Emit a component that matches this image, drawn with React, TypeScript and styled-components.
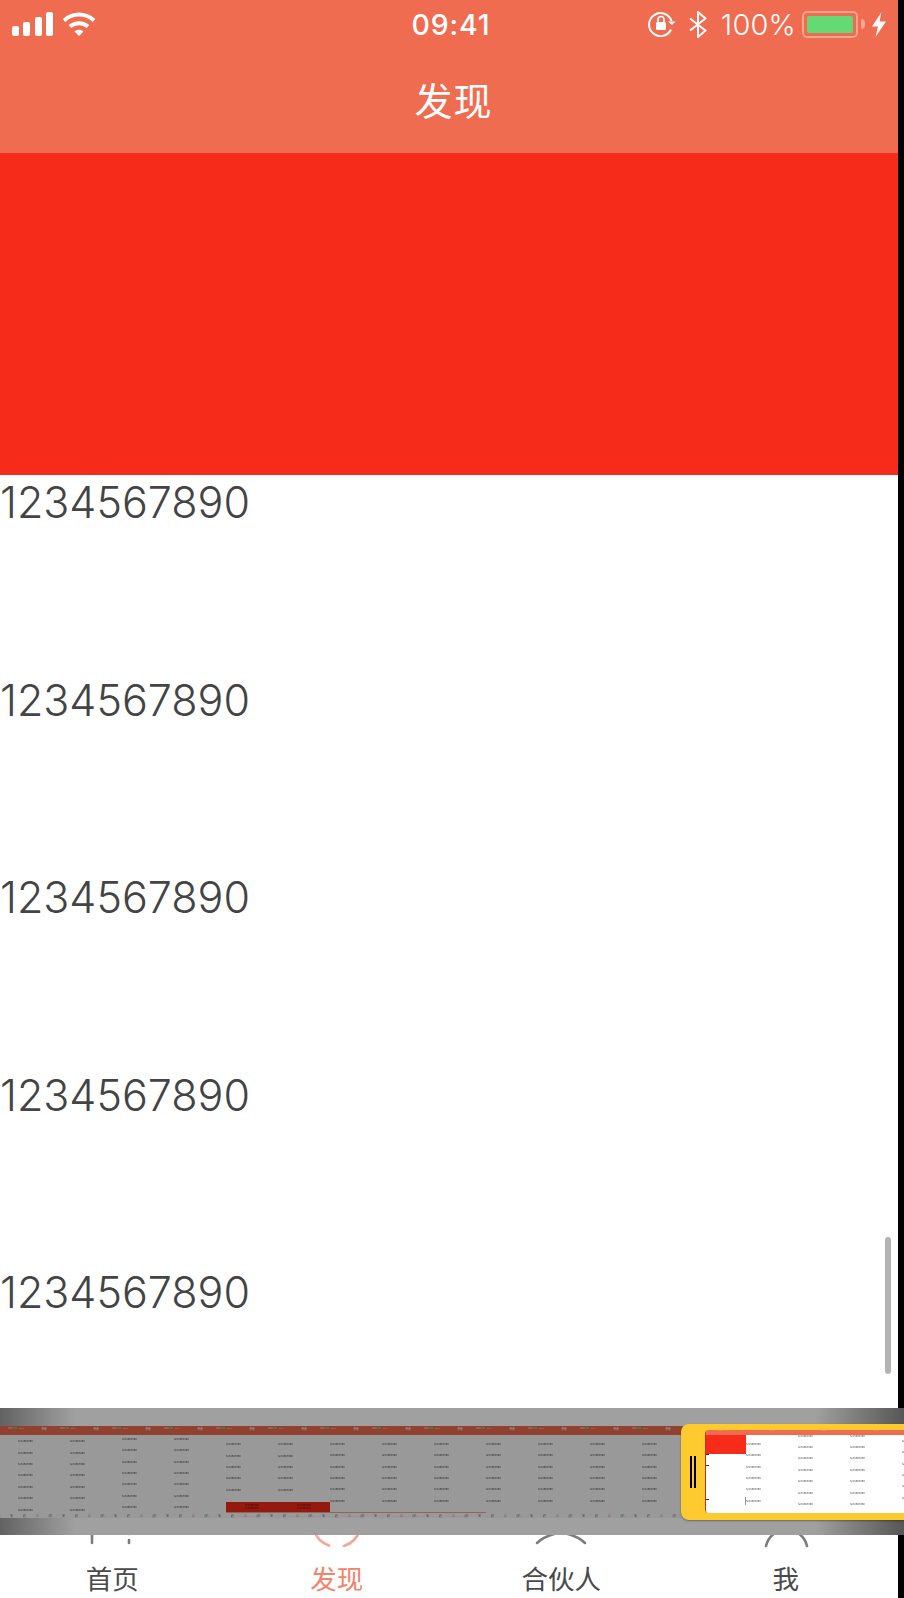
import React from "react";
import styled, { createGlobalStyle } from "styled-components";

const Global = createGlobalStyle`
  html, body { margin: 0; padding: 0; background: #000; }
`;

const CJK = `Inter, "Noto Sans CJK SC", "Noto Sans", sans-serif`;
const ORANGE = "#f06c50";
const RED = "#f72b1a";

const Screen = styled.div`
  position: relative;
  width: 904px;
  height: 1598px;
  background: #000;
  overflow: hidden;
  font-family: ${CJK};
`;
const Phone = styled.div`
  position: relative;
  width: 898px;
  height: 1598px;
  background: #fff;
  display: flex;
  flex-direction: column;
`;
const Header = styled.header`
  height: 153px;
  background: ${ORANGE};
  color: #fff;
  flex: none;
`;
const StatusBar = styled.div`
  height: 48px;
  display: grid;
  grid-template-columns: 1fr auto 1fr;
  align-items: center;
  padding: 0 12px;
`;
const StatusLeft = styled.div`
  display: flex;
  align-items: center;
  gap: 8px;
`;
const StatusRight = styled.div`
  display: flex;
  align-items: center;
  justify-content: flex-end;
`;
const Time = styled.div`
  font-size: 28.5px;
  font-weight: 500;
  letter-spacing: 0.8px;
  margin-left: 4px;
`;
const Percent = styled.span`
  font-size: 29px;
  font-weight: 300;
  margin: 0 6px 0 14px;
  letter-spacing: 0.2px;
`;
const Battery = styled.div`
  width: 56px;
  height: 27px;
  box-sizing: border-box;
  border: 2px solid #f9a391;
  border-radius: 5px;
  padding: 3px;
`;
const BatteryFill = styled.div`
  height: 100%;
  background: #65da74;
  border-radius: 2px;
`;
const BatteryNub = styled.div`
  width: 4px;
  height: 10px;
  margin: 0 7px 0 3px;
  background: #f9a391;
  border-radius: 0 5px 5px 0;
`;
const Title = styled.h1`
  margin: 0;
  height: 105px;
  line-height: 106px;
  padding-left: 9px;
  text-align: center;
  font-size: 38px;
  font-weight: 400;
  letter-spacing: 1px;
`;
const Content = styled.main`
  flex: 1;
  min-height: 0;
  overflow: hidden;
`;
const Banner = styled.div`
  height: 322px;
  background: ${RED};
`;
const Row = styled.div`
  height: 197.6px;
  line-height: 55px;
  font-size: 43px;
  font-weight: 350;
  color: #444;
  letter-spacing: 0;
`;
const ScrollBar = styled.div`
  position: absolute;
  left: 885px;
  top: 1237px;
  width: 6px;
  height: 137px;
  border-radius: 3px;
  background: #b3b3b3;
`;
const TabBar = styled.nav`
  height: 108px;
  flex: none;
  display: grid;
  grid-template-columns: repeat(4, 1fr);
`;
const Tab = styled.div<{ $active?: boolean }>`
  display: flex;
  flex-direction: column;
  align-items: center;
  color: ${(p) => (p.$active ? "#f2846c" : "#4a4a4a")};
`;
const TabLabel = styled.span`
  font-size: 26.5px;
  line-height: 36px;
  margin-top: 70px;
  font-weight: 400;
  font-family: "Noto Sans CJK SC", sans-serif;
`;
const TabIcon = styled.svg`
  display: block;
  width: 60px;
  height: 60px;
  margin-bottom: -60px;
  fill: none;
  stroke: currentColor;
  stroke-width: 2.6;
  stroke-linecap: round;
  opacity: 0.72;
`;

/* multitasking strip */
const Switcher = styled.div`
  position: absolute;
  left: 0;
  top: 1408px;
  width: 904px;
  height: 127px;
  display: flex;
  flex-direction: column;
  background: #a0a0a0;
`;
const Band = styled.div<{ $h: number }>`
  height: ${(p) => p.$h}px;
  flex: none;
  background: linear-gradient(90deg, #626262 0, #a0a0a0 75px, #a0a0a0 815px, #565656 904px);
`;
const Strip = styled.div`
  height: 92px;
  flex: none;
  overflow: hidden;
  display: flex;
  filter: brightness(0.6) blur(0.45px);
  background: #fff;
  margin-left: -34px;
  width: 938px;
`;
const Thumb = styled.div`
  width: 52px;
  height: 92px;
  flex: none;
  display: flex;
  flex-direction: column;
  background: #fff;
`;
const MiniHeader = styled.div`
  height: 9px;
  flex: none;
  background: ${ORANGE};
  color: #fff;
  display: grid;
  grid-template-columns: 1fr auto 1fr;
  align-items: start;
  font-size: 2px;
  line-height: 2.6px;
  text-align: center;
  padding: 0.6px 1px 0;
  box-sizing: border-box;
`;
const MiniSide = styled.span<{ $right?: boolean }>`
  display: flex;
  justify-content: ${(p) => (p.$right ? "flex-end" : "flex-start")};
  align-items: center;
  gap: 0.5px;
`;
const MiniBatt = styled.i`
  width: 3px;
  height: 1.6px;
  background: #65da74;
`;
const MiniTitle = styled.span`
  display: block;
  font-size: 2.4px;
`;
const MiniBody = styled.div`
  flex: 1;
  min-height: 0;
  overflow: hidden;
  display: flex;
  flex-direction: column;
`;
const MiniRows = styled.div<{ $top: number }>`
  flex: none;
  margin-top: ${(p) => p.$top}px;
`;
const MiniRow = styled.div`
  height: 11.4px;
  line-height: 11.4px;
  font-size: 2.5px;
  color: #333;
  white-space: nowrap;
`;
const MiniTopBanner = styled.div`
  height: 18.6px;
  flex: none;
  background: ${RED};
`;
const MiniAd = styled.div`
  margin-top: auto;
  height: 10px;
  flex: none;
  background: ${RED};
  color: #600;
  display: flex;
  flex-direction: column;
  align-items: center;
  justify-content: center;
  font-size: 2.3px;
  line-height: 3.2px;
`;
const MiniTabs = styled.div<{ $line?: boolean }>`
  height: 6px;
  flex: none;
  box-sizing: border-box;
  border-top: 0.6px solid ${(p) => (p.$line ? "#f3a79a" : "#fff")};
  display: grid;
  grid-template-columns: repeat(4, 1fr);
`;
const MiniTab = styled.div<{ $active?: boolean }>`
  display: flex;
  flex-direction: column;
  align-items: center;
  font-size: 1.7px;
  line-height: 1.9px;
  padding-top: 0.6px;
  color: ${(p) => (p.$active ? "#f2a594" : "#666")};
`;
const MiniDot = styled.i`
  width: 3px;
  height: 2.6px;
  background: currentColor;
  opacity: 0.35;
  border-radius: 50%;
`;
const Frame = styled.div`
  position: absolute;
  left: 681px;
  top: 16px;
  right: 0;
  height: 96px;
  display: flex;
  background: #fecb2f;
  border-radius: 8px 0 0 8px;
  box-shadow: 0 1px 2px rgba(0, 0, 0, 0.35);
`;
const Grip = styled.div`
  width: 24px;
  flex: none;
  display: flex;
  align-items: center;
  justify-content: flex-start;
  gap: 2px;
  padding-left: 9px;
  box-sizing: border-box;
`;
const GripBar = styled.i`
  width: 2px;
  height: 32px;
  background: #000;
`;
const Viewport = styled.div`
  position: relative;
  flex: 1;
  margin: 6px 0 7px;
  min-width: 0;
  overflow: hidden;
  background: #fff;
  border-radius: 4px 0 0 4px;
  border-left: 1px solid #c4301f;
`;
const ViewStrip = styled.div`
  display: flex;
  margin: -4px 0 0 -12px;
  filter: blur(0.4px);
`;
const EdgeTick = styled.i<{ $top: number }>`
  position: absolute;
  left: 0;
  top: ${(p) => p.$top}px;
  width: 3px;
  height: 1px;
  background: #333;
`;
const MiniScroll = styled.i`
  position: absolute;
  left: 39px;
  top: 67px;
  width: 1px;
  height: 8px;
  background: #999;
`;
const LockIcon = styled.svg`
  margin-right: 13px;
`;

type ThumbSpec = { rows?: number; top?: number; ad?: boolean; hero?: boolean; line?: boolean };

const rep = (n: number, s: ThumbSpec): ThumbSpec[] => Array.from({ length: n }, () => s);

const stripThumbs: ThumbSpec[] = [
  ...rep(3, { rows: 7, top: 1.3 }),
  ...rep(2, { rows: 7, top: -1.2 }),
  ...rep(2, { rows: 5, top: 4.3, ad: true, line: true }),
  ...rep(3, { rows: 6, top: 3.8, line: true }),
  ...rep(9, { rows: 6, top: 3.8 }),
];
const frameThumbs: ThumbSpec[] = [
  { hero: true },
  { rows: 6, top: 3.8 },
  ...rep(2, { rows: 7, top: -4.4 }),
  { rows: 6, top: 0.8 },
];

const tabs = ["首页", "发现", "合伙人", "我"];

const MiniPage = ({ spec }: { spec: ThumbSpec }) => (
  <Thumb>
    <MiniHeader>
      <MiniSide>••••</MiniSide>
      <span>
        09:41
        <MiniTitle>发现</MiniTitle>
      </span>
      <MiniSide $right>
        100%
        <MiniBatt />
      </MiniSide>
    </MiniHeader>
    {spec.hero && <MiniTopBanner />}
    <MiniBody>
      <MiniRows $top={spec.top ?? 0}>
        {Array.from({ length: spec.rows ?? 0 }, (_, i) => (
          <MiniRow key={i}>1234567890</MiniRow>
        ))}
      </MiniRows>
      {spec.ad && (
        <MiniAd>
          <span>1234567890</span>
          <span>1234567890</span>
        </MiniAd>
      )}
    </MiniBody>
    <MiniTabs $line={spec.line}>
      {tabs.map((t, i) => (
        <MiniTab key={t} $active={i === 1}>
          <MiniDot />
          {t}
        </MiniTab>
      ))}
    </MiniTabs>
  </Thumb>
);

const Signal = () => (
  <svg width="42" height="24" viewBox="0 0 42 24" fill="#fff">
    <rect x="0" y="14" width="7" height="10" rx="2" />
    <rect x="11" y="10" width="7" height="14" rx="2" />
    <rect x="23" y="5" width="7" height="19" rx="2" />
    <rect x="34" y="0" width="7" height="24" rx="2" />
  </svg>
);
const Wifi = () => (
  <svg width="34" height="24" viewBox="0 0 34 24" fill="none" stroke="#fff" strokeWidth="4">
    <path d="M2 8.5C10.5 0.5 23.5 0.5 32 8.5" />
    <path d="M8 14.5C13 10 21 10 26 14.5" />
    <path d="M12.5 19.5L17 24L21.5 19.5C19 17 15 17 12.5 19.5Z" fill="#fff" stroke="none" />
  </svg>
);
const RotationLock = () => (
  <LockIcon width="28" height="26" viewBox="0 0 28 26" fill="none" stroke="#fff" strokeWidth="2">
    <path d="M23 18.5A11.5 11.5 0 1 1 23.5 10" />
    <path d="M20 10.5L24 14L27.5 10.5Z" fill="#fff" stroke="none" />
    <rect x="8" y="11" width="10" height="8" rx="1.5" fill="#fff" stroke="none" />
    <path d="M10 11V8.5a3 3 0 0 1 6 0V11" strokeWidth="1.6" />
  </LockIcon>
);
const Bluetooth = () => (
  <svg width="18" height="27" viewBox="0 0 18 27" fill="none" stroke="#fff" strokeWidth="2">
    <path d="M1 7.5L16.5 19.5L9 26V1L16.5 7.5L1 19.5" />
  </svg>
);
const Bolt = () => (
  <svg width="14" height="25" viewBox="0 0 14 25" fill="#fff">
    <path d="M9.5 0L0 14.5H6L3.5 25L14 9.5H7.5Z" />
  </svg>
);

const HomeIcon = () => (
  <TabIcon viewBox="0 0 60 60">
    <path d="M10 53V25L28 9L47 25V44" />
    <path d="M47 50V53" />
  </TabIcon>
);
const FindIcon = () => (
  <TabIcon viewBox="0 0 60 60">
    <path d="M22 55.6A24 24 0 1 1 37 55.9" />
    <path d="M30 25L38 25L34 38L24 40Z" />
  </TabIcon>
);
const TeamIcon = () => (
  <TabIcon viewBox="0 0 60 60">
    <circle cx="30" cy="24" r="11" />
    <path d="M6 53C10 49 16 46 23 44C26 41 34 41 37 44C44 46 50 49 54 53" />
  </TabIcon>
);
const MeIcon = () => (
  <TabIcon viewBox="0 0 60 60">
    <circle cx="30.5" cy="22" r="11" />
    <path d="M10 56A21 21 0 0 1 51 56" />
  </TabIcon>
);
const icons = [<HomeIcon key="h" />, <FindIcon key="f" />, <TeamIcon key="t" />, <MeIcon key="m" />];

export default function App() {
  return (
    <Screen>
      <Global />
      <Phone>
        <Header>
          <StatusBar>
            <StatusLeft>
              <Signal />
              <Wifi />
            </StatusLeft>
            <Time>09:41</Time>
            <StatusRight>
              <RotationLock />
              <Bluetooth />
              <Percent>100%</Percent>
              <Battery>
                <BatteryFill />
              </Battery>
              <BatteryNub />
              <Bolt />
            </StatusRight>
          </StatusBar>
          <Title>发现</Title>
        </Header>
        <Content>
          <Banner />
          {Array.from({ length: 5 }, (_, i) => (
            <Row key={i}>1234567890</Row>
          ))}
        </Content>
        <TabBar>
          {tabs.map((t, i) => (
            <Tab key={t} $active={i === 1}>
              {icons[i]}
              <TabLabel>{t}</TabLabel>
            </Tab>
          ))}
        </TabBar>
        <ScrollBar />
      </Phone>
      <Switcher>
        <Band $h={18} />
        <Strip>
          {stripThumbs.map((s, i) => (
            <MiniPage key={i} spec={s} />
          ))}
        </Strip>
        <Band $h={17} />
        <Frame>
          <Grip>
            <GripBar />
            <GripBar />
          </Grip>
          <Viewport>
            <ViewStrip>
              {frameThumbs.map((s, i) => (
                <MiniPage key={i} spec={s} />
              ))}
            </ViewStrip>
            <EdgeTick $top={24} />
            <EdgeTick $top={35} />
            <EdgeTick $top={69} />
            <MiniScroll />
          </Viewport>
        </Frame>
      </Switcher>
    </Screen>
  );
}
